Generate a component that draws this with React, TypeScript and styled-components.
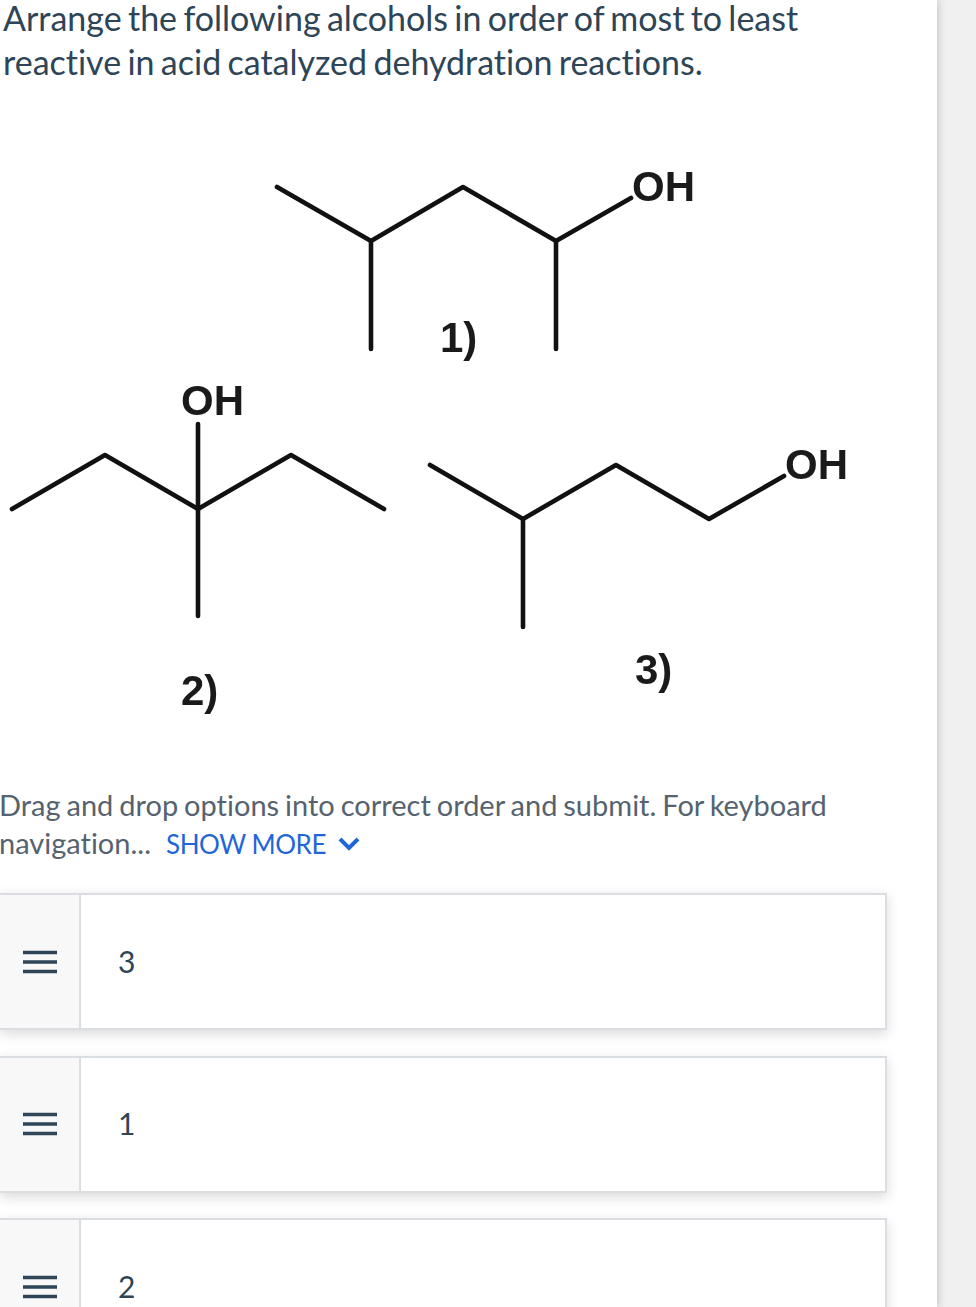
import React from "react";
import styled, { createGlobalStyle } from "styled-components";

const Global = createGlobalStyle`
  html, body { margin: 0; padding: 0; background: #f0f0f0; }
  #root { height: 1307px; overflow: hidden; }
`;

const Page = styled.div`
  display: flex;
  height: 1307px;
  overflow: hidden;
  font-family: Lato, "Noto Sans", sans-serif;
  font-variant-ligatures: none;
`;

const Main = styled.main`
  width: 937px;
  flex: none;
  background: #fff;
  box-shadow: 2px 0 7px rgba(0, 0, 0, 0.16);
  position: relative;
`;

const Side = styled.aside`
  flex: 1;
  background: #f0f0f0;
`;

const Title = styled.h1`
  margin: -4px 0 0;
  padding: 0 0 0 3px;
  height: 84px;
  font-size: 34px;
  line-height: 44px;
  font-weight: 400;
  word-spacing: -2.4px;
  color: #2e4558;
  width: 840px;
`;

const Figure = styled.svg`
  display: block;
  width: 880px;
  height: 636px;
  margin-top: 70px;
  filter: blur(0.5px);
`;

const Bond = styled.polyline`
  fill: none;
  stroke: #111;
  stroke-width: 4.6;
  stroke-linecap: round;
  stroke-linejoin: round;
`;

const Label = styled.text`
  font-family: "Liberation Sans", Arial, sans-serif;
  font-weight: 700;
  font-size: 42px;
  fill: #1a1a1a;
`;

const Instructions = styled.p`
  margin: 0 0 0 -1px;
  width: 860px;
  font-size: 29px;
  line-height: 38px;
  word-spacing: -1.5px;
  color: #56636f;
`;

const ShowMore = styled.span`
  display: inline-flex;
  align-items: center;
  gap: 12px;
  margin-left: 15px;
  font-size: 26px;
  letter-spacing: -0.45px;
  word-spacing: 0;
  color: #1f66d9;
`;

const List = styled.div`
  display: flex;
  flex-direction: column;
  gap: 25.5px;
  margin-top: 30px;
  width: 887px;
`;

const Card = styled.div`
  display: flex;
  height: 133px;
  flex: none;
  background: #fff;
  border: 2px solid #dadde1;
  border-left: none;
  box-shadow: 0 4px 12px rgba(0, 0, 0, 0.15);
`;

const Handle = styled.div`
  flex: none;
  display: flex;
  align-items: center;
  justify-content: center;
  background: #f8f8f8;
  border-right: 2px solid #dadde1;
  box-sizing: border-box;
  width: 81px;
`;

const Item = styled.div`
  display: flex;
  align-items: center;
  padding: 0 0 2px 37px;
  font-size: 30px;
  color: #2e4558;
`;

const Grip = () => (
  <svg width="34" height="24" viewBox="0 0 34 24" aria-hidden="true">
    <path d="M0 2.5h34M0 12h34M0 21.5h34" stroke="#2e4558" strokeWidth="3.4" fill="none" />
  </svg>
);

const Chevron = () => (
  <svg width="22" height="16" viewBox="0 0 22 16" aria-hidden="true">
    <path d="M2 3l9 9 9-9" stroke="#1f66d9" strokeWidth="4" fill="none" />
  </svg>
);

const bonds = [
  "277,187 371,241 463,187 556,241 631,198",
  "371,241 371,349",
  "556,241 556,349",
  "12,509 105,455 198,509 291,455 384,509",
  "198,424 198,616",
  "430,465 523,519 616,465 709,519 784,476",
  "523,519 523,627",
];

const labels: [string, number, number][] = [
  ["OH", 632, 201],
  ["1)", 440, 352],
  ["OH", 181, 415],
  ["2)", 181, 705],
  ["OH", 785, 479],
  ["3)", 635, 684],
];

const order = ["3", "1", "2"];

export default function App() {
  return (
    <Page>
      <Global />
      <Main>
        <Title>Arrange the following alcohols in order of most to least reactive in acid catalyzed dehydration reactions.</Title>
        <Figure viewBox="0 150 880 636">
          {bonds.map((b) => (
            <Bond key={b} points={b} />
          ))}
          {labels.map(([t, x, y]) => (
            <Label key={`${t}${x}`} x={x} y={y}>
              {t}
            </Label>
          ))}
        </Figure>
        <Instructions>
          Drag and drop options into correct order and submit. For keyboard navigation...
          <ShowMore>
            SHOW MORE <Chevron />
          </ShowMore>
        </Instructions>
        <List>
          {order.map((n) => (
            <Card key={n}>
              <Handle>
                <Grip />
              </Handle>
              <Item>{n}</Item>
            </Card>
          ))}
        </List>
      </Main>
      <Side />
    </Page>
  );
}
